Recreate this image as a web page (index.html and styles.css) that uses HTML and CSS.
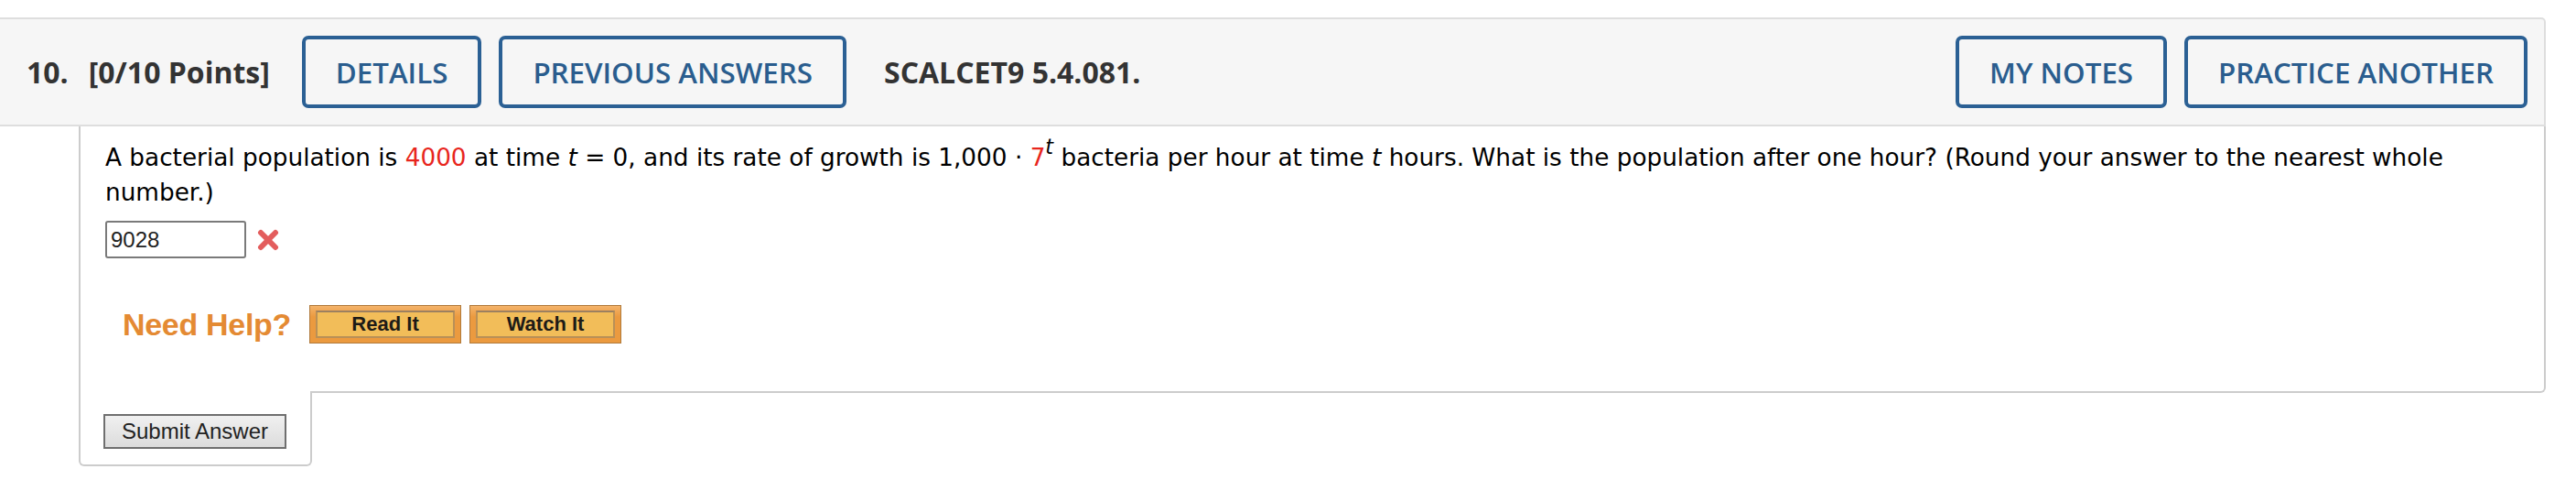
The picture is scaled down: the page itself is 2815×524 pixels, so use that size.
FILE: index.html
```html
<!DOCTYPE html>
<html>
<head>
<meta charset="utf-8">
<link rel="stylesheet" href="styles.css">
</head>
<body>
<div class="question">
  <div class="qhead">
    <div class="qnum"><span class="num">10.</span><span class="pts">[0/10 Points]</span></div>
    <button class="hbtn">DETAILS</button>
    <button class="hbtn">PREVIOUS ANSWERS</button>
    <div class="qid">SCALCET9 5.4.081.</div>
    <div class="spacer"></div>
    <button class="hbtn">MY NOTES</button>
    <button class="hbtn">PRACTICE ANOTHER</button>
  </div>
  <div class="qbody">
    <p class="qtext">A bacterial population is <span class="red">4000</span> at time <i>t</i> = 0, and its rate of growth is 1,000 &middot; <span class="red">7</span><sup><i>t</i></sup> bacteria per hour at time <i>t</i> hours. What is the population after one hour? (Round your answer to the nearest whole<br>number.)</p>
    <div class="answer">
      <div class="ansbox">9028</div>
      <svg class="xmark" width="28" height="26" viewBox="0 0 28 26"><path d="M6 5 L22 21 M22 5 L6 21" stroke="#e35d5d" stroke-width="6" stroke-linecap="round"/></svg>
    </div>
    <div class="help">
      <span class="needhelp">Need Help?</span>
      <span class="hbox"><span class="hin">Read It</span></span>
      <span class="hbox"><span class="hin">Watch It</span></span>
    </div>
  </div>
  <div class="submittab">
    <button class="submit">Submit Answer</button>
  </div>
</div>
</body>
</html>
```
FILE: styles.css
```css
html, body { margin: 0; padding: 0; background: #fff; }
body { width: 2815px; }
.question { width: 2782px; padding-top: 19px; }
.qhead {
  display: flex; align-items: center;
  height: 115px;
  background: #f6f6f6;
  border-top: 2px solid #dedede;
  border-bottom: 2px solid #dedede;
  border-right: 2px solid #dedede;
  border-top-right-radius: 5px;
  padding: 0 18px 0 29px;
  font-family: "Open Sans", sans-serif;
}
.qnum { font-weight: 700; font-size: 32px; color: #333; margin-right: 35px; white-space: nowrap; }
.qnum .num { margin-right: 22px; }
.hbtn {
  font-family: "Open Sans", sans-serif;
  font-size: 31.3px; font-weight: 600; color: #2a5d8e;
  background: #f6f6f6;
  border: 4px solid #2b6094; border-radius: 7px;
  height: 79px; padding: 0 33px; margin: 0 19px 0 0;
  white-space: nowrap;
}
.qid { font-weight: 700; font-size: 32px; color: #333; margin-left: 22px; white-space: nowrap; }
.spacer { flex: 1; }
.hbtn:last-child { margin-right: 0; }
.qbody {
  margin-left: 86px;
  border-left: 2px solid #cccccc;
  border-right: 2px solid #cccccc;
  border-bottom: 2px solid #cccccc;
  border-bottom-right-radius: 6px;
  background: #fff;
  padding: 15px 40px 0 27px;
  height: 291px;
  box-sizing: border-box;
}
.qtext {
  margin: 0;
  font-family: "DejaVu Sans", Verdana, sans-serif;
  font-size: 26.3px; line-height: 38px; color: #000;
}
.qtext .red { color: #e8261d; }
.qtext sup { font-size: 0.85em; line-height: 0; vertical-align: 0.6em; }
.answer { display: flex; align-items: center; margin-top: 12px; }
.ansbox {
  box-sizing: border-box; width: 154px; height: 41px;
  border: 2px solid #7a7a7a; border-radius: 3px;
  font-family: "Liberation Sans", Arial, sans-serif; font-size: 24px; color: #222;
  padding: 4px 0 0 4px; line-height: 30px;
}
.xmark { margin-left: 10px; filter: blur(0.6px); }
.help { display: flex; align-items: center; margin-top: 51px; margin-left: 19px; }
.needhelp {
  font-family: "Liberation Sans", Arial, sans-serif; font-weight: 700; font-size: 34px;
  color: #e48a33; margin-right: 20px; letter-spacing: -0.3px;
}
.hbox {
  box-sizing: border-box; width: 166px; height: 42px; margin-right: 9px;
  background: linear-gradient(#f4b36a, #eb9a3f 30%, #eb9a3f);
  border: 1px solid #b07a3c;
  padding: 5px 6px;
  display: flex;
}
.hin {
  flex: 1;
  display: flex; align-items: center; justify-content: center;
  background: #f2bd59;
  border: 2px solid #b99057;
  border-top-color: #9c8060;
  font-family: "Liberation Sans", Arial, sans-serif; font-weight: 700; font-size: 22px; color: #1d1b17;
}
.submittab {
  position: relative;
  margin-left: 86px; margin-top: -2px;
  width: 255px; height: 82px; box-sizing: border-box;
  background: #fff;
  border-left: 2px solid #cccccc;
  border-right: 2px solid #cccccc;
  border-bottom: 2px solid #cccccc;
  border-radius: 0 0 6px 6px;
  padding: 25px 0 0 25px;
}
.submit {
  box-sizing: border-box; width: 200px; height: 38px;
  font-family: "Liberation Sans", Arial, sans-serif; font-size: 24px; color: #222;
  background: linear-gradient(#f0f0f0, #dcdcdc);
  border: 2px solid #6f6f6f; border-radius: 0;
  padding: 0; margin: 0;
}
```
